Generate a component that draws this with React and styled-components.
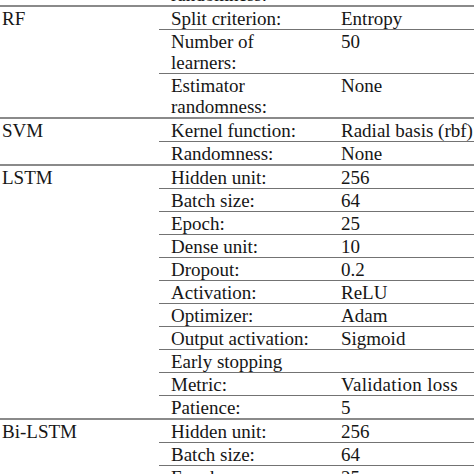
import React from 'react';
import styled, { createGlobalStyle } from 'styled-components';

const GlobalStyle = createGlobalStyle`
  html,
  body {
    margin: 0;
    padding: 0;
    background: #fff;
  }
`;

const Viewport = styled.div`
  width: 474px;
  height: 474px;
  overflow: hidden;
  background: #fff;
`;

const Table = styled.table`
  width: 500px;
  margin-top: -38px;
  border-collapse: collapse;
  table-layout: fixed;
  font-family: 'Liberation Serif', 'Times New Roman', serif;
  font-size: 19px;
  line-height: 21px;
  color: #161616;
`;

const Col = styled.col`
  width: ${(p) => p.$w}px;
`;

const ModelCell = styled.td`
  padding: 1px 4px 0 2px;
  vertical-align: top;
  border-bottom: 2px solid #8a8a8a;
`;

const ParamCell = styled.td`
  padding: 1px 14px 0 12px;
  vertical-align: top;
  letter-spacing: ${(p) => (p.$spread ? '0.3px' : 'normal')};
  white-space: ${(p) => (p.$nowrap ? 'nowrap' : 'normal')};
  border-bottom: ${(p) => (p.$end ? '2px solid #8a8a8a' : '1px solid #737373')};
`;

const groups = [
  { model: 'DT', params: [['Estimator randomness:', 'None']] },
  {
    model: 'RF',
    params: [
      ['Split criterion:', 'Entropy'],
      ['Number of learners:', '50'],
      ['Estimator randomness:', 'None'],
    ],
  },
  {
    model: 'SVM',
    params: [
      ['Kernel function:', 'Radial basis (rbf)'],
      ['Randomness:', 'None'],
    ],
  },
  {
    model: 'LSTM',
    params: [
      ['Hidden unit:', '256'],
      ['Batch size:', '64'],
      ['Epoch:', '25'],
      ['Dense unit:', '10'],
      ['Dropout:', '0.2'],
      ['Activation:', 'ReLU'],
      ['Optimizer:', 'Adam'],
      ['Output activation:', 'Sigmoid'],
      ['Early stopping', ''],
      ['Metric:', 'Validation loss'],
      ['Patience:', '5'],
    ],
  },
  {
    model: 'Bi-LSTM',
    params: [
      ['Hidden unit:', '256'],
      ['Batch size:', '64'],
      ['Epoch:', '25'],
      ['Dense unit:', '10'],
      ['Dropout:', '0.2'],
    ],
  },
];

const App = () => (
  <Viewport>
    <GlobalStyle />
    <Table>
      <colgroup>
        <Col $w={159} />
        <Col $w={170} />
        <Col $w={171} />
      </colgroup>
      <tbody>
        {groups.map((g) =>
          g.params.map(([name, value], i) => {
            const end = i === g.params.length - 1;
            return (
              <tr key={g.model + name}>
                {i === 0 && <ModelCell rowSpan={g.params.length}>{g.model}</ModelCell>}
                <ParamCell $end={end}>{name}</ParamCell>
                <ParamCell $end={end} $nowrap $spread={value === 'Validation loss'}>
                  {value}
                </ParamCell>
              </tr>
            );
          })
        )}
      </tbody>
    </Table>
  </Viewport>
);

export default App;
